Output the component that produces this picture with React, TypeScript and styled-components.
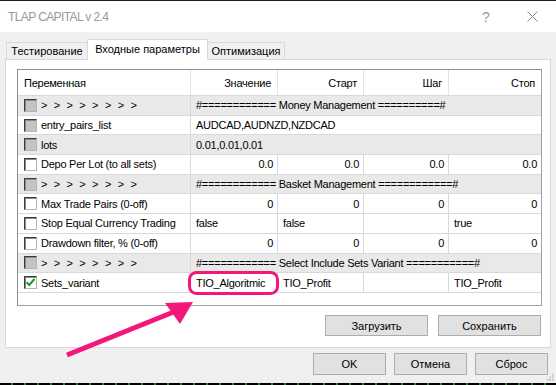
import React from "react";
import styled, { createGlobalStyle } from "styled-components";

const Global = createGlobalStyle`
  html, body { margin: 0; padding: 0; background: #000; }
  body {
    font-family: "Liberation Sans", Arial, sans-serif;
    font-size: 11px;
    color: #000;
  }
  * { box-sizing: border-box; }
`;

const Screen = styled.div`
  position: relative;
  width: 556px;
  height: 385px;
  overflow: hidden;
  display: flex;
  flex-direction: column;
  background: #f0f0f0;
  border-top: 1px solid #1b1b1b;
`;

const TitleBar = styled.div`
  height: 31px;
  flex-shrink: 0;
  background: #fff;
  display: flex;
  align-items: center;
  padding-left: 8px;
`;

const Title = styled.span`
  font-size: 12px;
  letter-spacing: -0.6px;
  color: #999;
`;

const TitleButtons = styled.div`
  margin-left: auto;
  display: flex;
  align-items: center;
  height: 100%;
`;

const HelpGlyph = styled.span`
  width: 46px;
  text-align: center;
  font-size: 14px;
  color: #9a9a9a;
`;

const CloseBtn = styled.span`
  width: 46px;
  display: flex;
  justify-content: center;
  align-items: center;
  margin-right: 1px;
`;

const Body = styled.div`
  flex: 1;
  display: flex;
  flex-direction: column;
  padding: 7px 5px 0 5px;
`;

const TabsRow = styled.div`
  height: 20px;
  display: flex;
  align-items: flex-end;
  padding-left: 1px;
  position: relative;
  z-index: 1;
`;

const Tab = styled.div<{ $active?: boolean; $w: number }>`
  width: ${(p) => p.$w}px;
  height: ${(p) => (p.$active ? 21 : 17)}px;
  margin-bottom: ${(p) => (p.$active ? -1 : 0)}px;
  display: flex;
  align-items: center;
  justify-content: center;
  padding-bottom: ${(p) => (p.$active ? 3 : 0)}px;
  background: ${(p) => (p.$active ? "#fff" : "#f0f0f0")};
  border: 1px solid #d9d9d9;
  border-bottom: none;
  margin-left: ${(p) => (p.$active ? -1 : 0)}px;
  margin-right: ${(p) => (p.$active ? -1 : 0)}px;
  white-space: nowrap;
`;

const Panel = styled.div`
  height: 289px;
  background: #fff;
  border: 1px solid #d9d9d9;
  padding: 9px 8px 11px 11px;
  display: flex;
  flex-direction: column;
`;

const Table = styled.div`
  height: 237px;
  border: 1px solid #a0a0a0;
  border-top-color: #8e8e8e;
  border-left-color: #8e8e8e;
  display: flex;
  flex-direction: column;
  background: #fff;
  letter-spacing: -0.25px;
`;

const HeaderRow = styled.div`
  display: grid;
  grid-template-columns: 173px 87px 86px 85px 1fr;
  height: 26px;
  flex-shrink: 0;
  border-bottom: 1px solid #d9d9d9;
`;

const HeaderCell = styled.div<{ $right?: boolean; $last?: boolean }>`
  display: flex;
  align-items: center;
  justify-content: ${(p) => (p.$right ? "flex-end" : "flex-start")};
  padding: ${(p) => (p.$right ? "0 6px 0 0" : "0 0 0 6px")};
  border-right: ${(p) => (p.$last ? "none" : "1px solid #e3e3e3")};
`;

const Row = styled.div<{ $shade?: boolean }>`
  display: grid;
  grid-template-columns: 173px 87px 86px 85px 1fr;
  height: 19.7px;
  flex-shrink: 0;
  border-bottom: 1px solid #d9d9d9;
  background: ${(p) => (p.$shade ? "#e9e9e9" : "#fff")};
`;

const Cell = styled.div<{ $right?: boolean; $span?: boolean; $last?: boolean }>`
  display: flex;
  align-items: center;
  justify-content: ${(p) => (p.$right ? "flex-end" : "flex-start")};
  padding: ${(p) => (p.$right ? "0 4px 0 0" : "0 0 0 5px")};
  border-right: ${(p) => (p.$last ? "none" : "1px solid #d9d9d9")};
  grid-column: ${(p) => (p.$span ? "2 / -1" : "auto")};
  white-space: nowrap;
  overflow: hidden;
`;

const NameCell = styled.div`
  display: flex;
  align-items: center;
  gap: 4px;
  padding-left: 6px;
  border-right: 1px solid #d9d9d9;
  white-space: nowrap;
  overflow: hidden;
`;

const Box = styled.span<{ $gray?: boolean }>`
  width: 13px;
  height: 13px;
  flex-shrink: 0;
  display: inline-flex;
  align-items: center;
  justify-content: center;
  border: 1px solid;
  border-color: #3c3c3c #b4b4b4 #b4b4b4 #3c3c3c;
  box-shadow: inset 1px 1px 0 #8a8a8a;
  background: ${(p) => (p.$gray ? "#c4c4c4" : "#fff")};
`;

const Chevrons = styled.span`
  word-spacing: 3.8px;
`;

const Filler = styled.div`
  flex: 1;
`;

const ButtonRow = styled.div<{ $gap: number }>`
  display: flex;
  justify-content: flex-end;
  gap: ${(p) => p.$gap}px;
`;

const Button = styled.div<{ $w: number; $h: number }>`
  width: ${(p) => p.$w}px;
  height: ${(p) => p.$h}px;
  display: flex;
  align-items: center;
  justify-content: center;
  background: #e1e1e1;
  border: 1px solid #adadad;
`;

const PanelButtons = styled(ButtonRow)`
  margin-top: 9px;
  margin-right: 1px;
`;

const DialogButtons = styled(ButtonRow)`
  margin-top: 5px;
  margin-right: 3px;
`;

const ChartStrip = styled.div`
  position: absolute;
  left: 0;
  right: 0;
  bottom: 0;
  height: 2px;
  background: repeating-linear-gradient(
    90deg,
    #000 0 11px,
    #2e7d2e 11px 13px
  );
`;

const Overlay = styled.svg`
  position: absolute;
  left: 0;
  top: 0;
  pointer-events: none;
`;

const Grip = styled.svg`
  position: absolute;
  right: 2px;
  bottom: 4px;
`;

type DataRow =
  | { kind: "group"; text: string }
  | {
      kind: "param";
      name: string;
      gray?: boolean;
      checked?: boolean;
      shade?: boolean;
      span?: string;
      values?: string[];
      right?: boolean;
    };

const rows: DataRow[] = [
  { kind: "group", text: "#============ Money Management ==========#" },
  { kind: "param", name: "entry_pairs_list", gray: true, span: "AUDCAD,AUDNZD,NZDCAD" },
  { kind: "param", name: "lots", gray: true, shade: true, span: "0.01,0.01,0.01" },
  { kind: "param", name: "Depo Per Lot (to all sets)", values: ["0.0", "0.0", "0.0", "0.0"], right: true },
  { kind: "group", text: "#============ Basket Management ============#" },
  { kind: "param", name: "Max Trade Pairs (0-off)", values: ["0", "0", "0", "0"], right: true },
  { kind: "param", name: "Stop Equal Currency Trading", values: ["false", "false", "", "true"] },
  { kind: "param", name: "Drawdown filter, % (0-off)", values: ["0", "0", "0", "0"], right: true },
  { kind: "group", text: "#============ Select Include Sets Variant ===========#" },
  { kind: "param", name: "Sets_variant", checked: true, values: ["TIO_Algoritmic", "TIO_Profit", "", "TIO_Profit"] },
];

const Check = () => (
  <svg width="11" height="11" viewBox="0 0 11 11">
    <path d="M1.5 5.2 L4.2 8 L9.5 2" fill="none" stroke="#1d9b1d" strokeWidth="2" />
  </svg>
);

const CheckBox = ({ gray, checked }: { gray?: boolean; checked?: boolean }) => (
  <Box $gray={gray}>{checked ? <Check /> : null}</Box>
);

const GroupRow = ({ text }: { text: string }) => (
  <Row $shade>
    <NameCell>
      <CheckBox gray />
      <Chevrons>{"> > > > > > > >"}</Chevrons>
    </NameCell>
    <Cell $span $last>
      {text}
    </Cell>
  </Row>
);

const ParamRow = ({ r }: { r: Extract<DataRow, { kind: "param" }> }) => (
  <Row $shade={r.shade}>
    <NameCell>
      <CheckBox gray={r.gray} checked={r.checked} />
      <span>{r.name}</span>
    </NameCell>
    {r.span ? (
      <Cell $span $last>
        {r.span}
      </Cell>
    ) : (
      (r.values || []).map((v, i) => (
        <Cell key={i} $right={r.right} $last={i === 3}>
          {v}
        </Cell>
      ))
    )}
  </Row>
);

export default function App() {
  return (
    <>
      <Global />
      <Screen>
        <TitleBar>
          <Title>TLAP CAPITAL v 2.4</Title>
          <TitleButtons>
            <HelpGlyph>?</HelpGlyph>
            <CloseBtn>
              <svg width="11" height="11" viewBox="0 0 11 11">
                <path d="M0.5 0.5 L10.5 10.5 M10.5 0.5 L0.5 10.5" stroke="#8c8c8c" strokeWidth="1" />
              </svg>
            </CloseBtn>
          </TitleButtons>
        </TitleBar>
        <Body>
          <TabsRow>
            <Tab $w={82}>Тестирование</Tab>
            <Tab $w={121} $active>
              Входные параметры
            </Tab>
            <Tab $w={78}>Оптимизация</Tab>
          </TabsRow>
          <Panel>
            <Table>
              <HeaderRow>
                <HeaderCell>Переменная</HeaderCell>
                <HeaderCell $right>Значение</HeaderCell>
                <HeaderCell $right>Старт</HeaderCell>
                <HeaderCell $right>Шаг</HeaderCell>
                <HeaderCell $right $last>
                  Стоп
                </HeaderCell>
              </HeaderRow>
              {rows.map((r, i) =>
                r.kind === "group" ? <GroupRow key={i} text={r.text} /> : <ParamRow key={i} r={r} />
              )}
              <Filler />
            </Table>
            <PanelButtons $gap={10}>
              <Button $w={103} $h={21}>Загрузить</Button>
              <Button $w={103} $h={21}>Сохранить</Button>
            </PanelButtons>
          </Panel>
          <DialogButtons $gap={8}>
            <Button $w={73} $h={22}>OK</Button>
            <Button $w={73} $h={22}>Отмена</Button>
            <Button $w={73} $h={22}>Сброс</Button>
          </DialogButtons>
        </Body>
        <Grip width="7" height="7" viewBox="0 0 7 7">
          <rect x="5" y="0" width="1.5" height="1.5" fill="#b8b8b8" />
          <rect x="2.5" y="2.5" width="1.5" height="1.5" fill="#b8b8b8" />
          <rect x="5" y="2.5" width="1.5" height="1.5" fill="#b8b8b8" />
          <rect x="0" y="5" width="1.5" height="1.5" fill="#b8b8b8" />
          <rect x="2.5" y="5" width="1.5" height="1.5" fill="#b8b8b8" />
          <rect x="5" y="5" width="1.5" height="1.5" fill="#b8b8b8" />
        </Grip>
        <ChartStrip />
        <Overlay width="556" height="385" viewBox="0 0 556 385">
          <rect x="189.5" y="271.5" width="88" height="21" rx="7" ry="7" fill="none" stroke="#f4177a" strokeWidth="3" />
          <line x1="67" y1="354" x2="176" y2="310" stroke="#f4177a" strokeWidth="5" />
          <polygon points="193,301 165,302 180,323" fill="#f4177a" />
        </Overlay>
      </Screen>
    </>
  );
}
